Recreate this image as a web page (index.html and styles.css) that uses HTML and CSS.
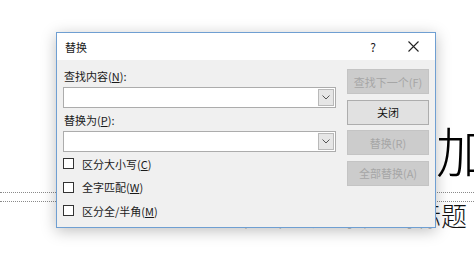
FILE: index.html
```html
<!DOCTYPE html>
<html>
  <head>
    <meta charset="UTF-8">
    <title>替换</title>
    <link rel="stylesheet" href="styles.css">
  </head>
  <body>
    <div id="desktop">
      <div class="slideTitle">加标题</div>
      <div class="slideSub">单击此处添加副标题</div>

      <div id="dialog">
        <div class="titleBar">
          <span class="caption">替换</span>
          <span class="help">?</span>
          <span class="close">
            <svg width="11" height="11" viewBox="0 0 11 11"><path d="M0.5 0.5 L10.5 10.5 M10.5 0.5 L0.5 10.5" stroke="#222" stroke-width="1.1" fill="none"/></svg>
          </span>
        </div>

        <div class="body">
          <div class="leftCol">
            <div class="label">查找内容(<u>N</u>):</div>
            <div class="combo">
              <span class="drop">
                <svg width="8" height="5" viewBox="0 0 8 5"><path d="M0.5 0.5 L4 4 L7.5 0.5" stroke="#555" stroke-width="1" fill="none"/></svg>
              </span>
            </div>
            <div class="label second">替换为(<u>P</u>):</div>
            <div class="combo">
              <span class="drop">
                <svg width="8" height="5" viewBox="0 0 8 5"><path d="M0.5 0.5 L4 4 L7.5 0.5" stroke="#555" stroke-width="1" fill="none"/></svg>
              </span>
            </div>
            <div class="checks">
              <div class="check"><span class="box"></span>区分大小写(<u>C</u>)</div>
              <div class="check"><span class="box"></span>全字匹配(<u>W</u>)</div>
              <div class="check"><span class="box"></span>区分全/半角(<u>M</u>)</div>
            </div>
          </div>

          <div class="rightCol">
            <button class="btn disabled">查找下一个(F)</button>
            <button class="btn">关闭</button>
            <button class="btn disabled">替换(R)</button>
            <button class="btn disabled">全部替换(A)</button>
          </div>
        </div>
      </div>
    </div>
  </body>
</html>
```
FILE: styles.css
```css
body {
  margin: 0;
  background: #fff;
  font-family: "Noto Sans CJK SC", "Noto Sans", sans-serif;
}

#desktop {
  position: relative;
  width: 474px;
  height: 269px;
  overflow: hidden;
}

/* slide placeholders behind the dialog */
.slideTitle {
  position: absolute;
  left: 0;
  top: 123px;
  width: 474px;
  height: 70px;
  padding-left: 436px;
  box-sizing: border-box;
  border-bottom: 1px dotted #8a8a8a;
  font-size: 54px;
  line-height: 54px;
  font-weight: 300;
  white-space: nowrap;
  overflow: hidden;
  color: #000;
}

.slideSub {
  position: absolute;
  left: 0;
  top: 201px;
  width: 474px;
  height: 40px;
  padding-left: 233px;
  padding-top: 0;
  box-sizing: border-box;
  border-top: 1px dotted #8a8a8a;
  font-size: 26px;
  line-height: 26px;
  font-weight: 300;
  white-space: nowrap;
  color: #111;
}

/* dialog window */
#dialog {
  position: absolute;
  left: 56px;
  top: 32px;
  width: 380px;
  height: 196px;
  box-sizing: border-box;
  border: 1px solid #6f9fd2;
  background: #f0f0f0;
  box-shadow: 0 3px 14px rgba(0, 0, 0, 0.25);
  font-size: 11px;
  color: #1a1a1a;
}

.titleBar {
  display: flex;
  align-items: center;
  height: 27px;
  background: #fff;
  padding-left: 8px;
}

.caption {
  flex: 1;
}

.help {
  width: 36px;
  text-align: center;
  font-size: 12px;
}

.close {
  width: 44px;
  display: flex;
  justify-content: center;
}

.body {
  display: flex;
  padding: 8px 6px 0 6px;
}

.leftCol {
  width: 273px;
}

.label {
  height: 16px;
  line-height: 16px;
  padding-left: 1px;
  margin-bottom: 3px;
}

.label.second {
  margin-top: 4px;
}

.combo {
  height: 21px;
  box-sizing: border-box;
  border: 1px solid #acacac;
  background: #fff;
  display: flex;
  justify-content: flex-end;
}

.drop {
  width: 16px;
  margin: 1px;
  box-sizing: border-box;
  border: 1px solid #b9b9b9;
  background: #e6e6e6;
  display: flex;
  align-items: center;
  justify-content: center;
}

.check {
  display: flex;
  align-items: center;
  height: 23.5px;
}

.box {
  width: 11px;
  height: 11px;
  box-sizing: border-box;
  border: 1px solid #333;
  background: #fff;
  margin-right: 8px;
}

.rightCol {
  width: 82px;
  margin-left: 11px;
  margin-top: 1px;
  display: flex;
  flex-direction: column;
  gap: 5.5px;
}

.btn {
  height: 25px;
  padding: 0;
  box-sizing: border-box;
  border: 1px solid #adadad;
  background: #e1e1e1;
  color: #111;
  font-family: inherit;
  font-size: 11px;
}

.btn.disabled {
  background: #cccccc;
  border-color: #c4c4c4;
  color: #a6a6a6;
}
```
